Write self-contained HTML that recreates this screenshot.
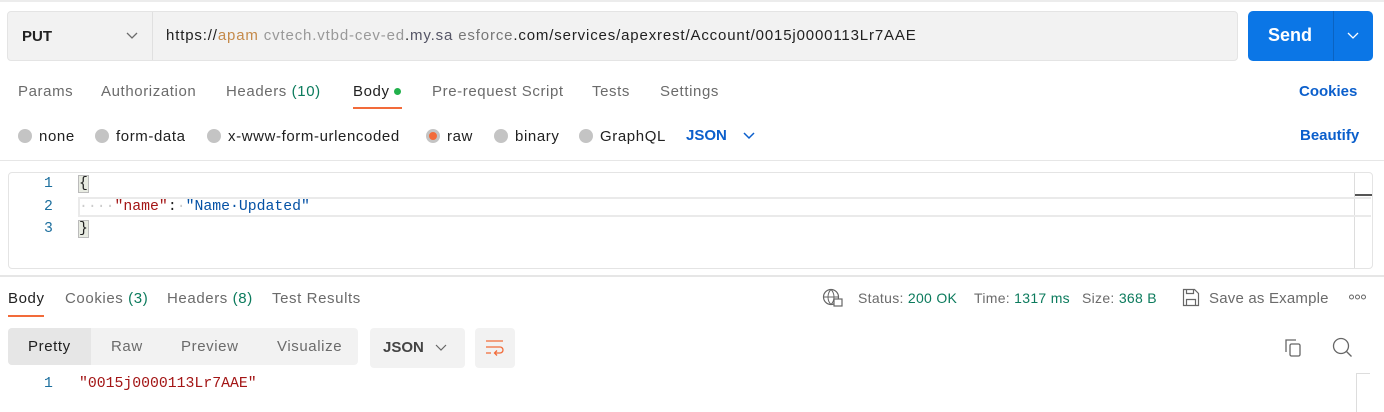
<!DOCTYPE html>
<html><head><style>
*{box-sizing:border-box;margin:0;padding:0}
body{width:1384px;height:412px;background:#fff;font-family:"Liberation Sans",sans-serif;font-size:14px;color:#212121;position:relative;overflow:hidden}
.a{position:absolute;white-space:nowrap}
.t{font-size:15px;letter-spacing:0.6px}
.g{color:#6b6b6b}
.gr{color:#0c7b5d}
.mono{font-family:"Liberation Mono",monospace;font-size:14.8px}
.rad{position:absolute;width:14px;height:14px;border-radius:50%;background:#c4c4c4;top:129px}
</style></head><body>
<div class="a" style="left:0;top:0;width:1384px;height:2px;background:#ececec"></div>
<div class="a" style="left:7px;top:11px;width:1231px;height:50px;background:#f2f2f2;border:1px solid #e4e4e4;border-radius:4px"></div>
<div class="a" style="left:152px;top:12px;width:1px;height:48px;background:#e0e0e0"></div>
<div class="a" style="left:22px;top:28px;font-weight:bold;font-size:15px;color:#212121">PUT</div>
<svg class="a" style="left:126px;top:32px" width="12" height="8"><path d="M1 1l5 5 5-5" stroke="#6b6b6b" fill="none" stroke-width="1.3"/></svg>
<div class="a" style="left:166px;top:27px;color:#212121;font-size:15px;letter-spacing:0.85px">https://<span style="color:#c58a4a">apam</span> <span style="color:#999">cvtech.vtbd-cev-ed</span>.<span style="color:#556">my.sa</span> <span style="color:#777">esforce</span>.com/services/apexrest/Account/0015j0000113Lr7AAE</div>
<div class="a" style="left:1248px;top:11px;width:125px;height:50px;background:#0b76e6;border-radius:5px"></div>
<div class="a" style="left:1333px;top:11px;width:1px;height:50px;background:#0a63c2"></div>
<div class="a" style="left:1268px;top:25px;color:#fff;font-weight:bold;font-size:18px">Send</div>
<svg class="a" style="left:1347px;top:32px" width="12" height="8"><path d="M1 1l5 5 5-5" stroke="#fff" fill="none" stroke-width="1.3"/></svg>

<div class="a g t" style="left:18px;top:83px">Params</div>
<div class="a g t" style="left:101px;top:83px">Authorization</div>
<div class="a g t" style="left:226px;top:83px">Headers <span class="gr">(10)</span></div>
<div class="a t" style="left:353px;top:83px">Body</div>
<div class="a" style="left:394px;top:88px;width:7px;height:7px;border-radius:50%;background:#22b14c"></div>
<div class="a" style="left:353px;top:107px;width:49px;height:2px;background:#f26b3a"></div>
<div class="a g t" style="left:432px;top:83px">Pre-request Script</div>
<div class="a g t" style="left:592px;top:83px">Tests</div>
<div class="a g t" style="left:660px;top:83px">Settings</div>
<div class="a" style="left:1299px;top:83px;font-size:15px;color:#0b5fcc;font-weight:bold">Cookies</div>

<div class="rad" style="left:18px"></div><div class="a t" style="left:39px;top:128px">none</div>
<div class="rad" style="left:95px"></div><div class="a t" style="left:116px;top:128px">form-data</div>
<div class="rad" style="left:207px"></div><div class="a t" style="left:228px;top:128px">x-www-form-urlencoded</div>
<div class="rad" style="left:426px;background:#f26b3a;border:3px solid #c4c4c4"></div><div class="a t" style="left:447px;top:128px">raw</div>
<div class="rad" style="left:494px"></div><div class="a t" style="left:515px;top:128px">binary</div>
<div class="rad" style="left:579px"></div><div class="a t" style="left:600px;top:128px">GraphQL</div>
<div class="a" style="left:686px;top:127px;font-size:15px;color:#0b5fcc;font-weight:bold">JSON</div>
<svg class="a" style="left:743px;top:132px" width="12" height="8"><path d="M1 1l5 5 5-5" stroke="#0b5fcc" fill="none" stroke-width="1.5"/></svg>
<div class="a" style="left:1300px;top:127px;font-size:15px;color:#0b5fcc;font-weight:bold">Beautify</div>

<div class="a" style="left:0;top:160px;width:1384px;height:1px;background:#e6e6e6"></div>
<div class="a" style="left:8px;top:172px;width:1365px;height:97px;border:1px solid #e4e4e4;border-radius:4px"></div>
<div class="a" style="left:1354px;top:173px;width:1px;height:95px;background:#ddd"></div>
<div class="a" style="left:1355px;top:194px;width:17px;height:2px;background:#555"></div>
<div class="a" style="left:78px;top:197px;width:1293px;height:20px;border:2px solid #eaeaea;border-right:none"></div>
<div class="a mono" style="left:44px;top:176px;color:#1d6f9e">1</div>
<div class="a mono" style="left:44px;top:199px;color:#1d6f9e">2</div>
<div class="a mono" style="left:44px;top:221px;color:#1d6f9e">3</div>
<div class="a mono" style="left:79px;top:176px;background:#e8ebe2;outline:1px solid #bbb">{</div>
<div class="a mono" style="left:79px;top:199px"><span style="color:#ccc">····</span><span style="color:#a31515">"name"</span>:<span style="color:#ccc">·</span><span style="color:#0451a5">"Name·Updated"</span></div>
<div class="a mono" style="left:79px;top:221px;background:#e8ebe2;outline:1px solid #bbb">}</div>

<div class="a" style="left:0;top:275px;width:1384px;height:2px;background:#e6e6e6"></div>
<div class="a t" style="left:8px;top:290px">Body</div>
<div class="a" style="left:8px;top:315px;width:36px;height:2px;background:#f26b3a"></div>
<div class="a g t" style="left:65px;top:290px">Cookies <span class="gr">(3)</span></div>
<div class="a g t" style="left:167px;top:290px">Headers <span class="gr">(8)</span></div>
<div class="a g t" style="left:272px;top:290px">Test Results</div>
<svg class="a" style="left:822px;top:288px" width="22" height="20"><circle cx="9" cy="9" r="7.5" stroke="#666" fill="none" stroke-width="1.2"/><path d="M1.5 9h15M9 1.5c-4 4-4 11 0 15M9 1.5c4 4 4 11 0 15" stroke="#666" fill="none" stroke-width="1"/><rect x="12" y="11" width="8" height="7" fill="#fff" stroke="#666" stroke-width="1.2"/></svg>
<div class="a g" style="left:858px;top:290px;letter-spacing:0.3px">Status: <span class="gr">200 OK</span></div>
<div class="a g" style="left:974px;top:290px;letter-spacing:0.3px">Time: <span class="gr">1317 ms</span></div>
<div class="a g" style="left:1082px;top:290px;letter-spacing:0.3px">Size: <span class="gr">368 B</span></div>
<svg class="a" style="left:1182px;top:288px" width="18" height="19"><path d="M1.5 1.5h11l4 4v12h-15z" stroke="#666" fill="none" stroke-width="1.2"/><path d="M4.5 1.5v4h7v-4M4.5 17.5v-6h9v6" stroke="#666" fill="none" stroke-width="1.2"/></svg>
<div class="a g" style="left:1209px;top:290px;font-size:15px;letter-spacing:0.2px">Save as Example</div>
<svg class="a" style="left:1349px;top:294px" width="18" height="6"><circle cx="2.5" cy="3" r="2" stroke="#666" fill="none"/><circle cx="8.5" cy="3" r="2" stroke="#666" fill="none"/><circle cx="14.5" cy="3" r="2" stroke="#666" fill="none"/></svg>

<div class="a" style="left:8px;top:328px;width:350px;height:37px;background:#f2f2f2;border-radius:4px"></div>
<div class="a" style="left:8px;top:328px;width:83px;height:37px;background:#e6e6e6;border-radius:4px 0 0 4px"></div>
<div class="a t" style="left:28px;top:338px">Pretty</div>
<div class="a g t" style="left:111px;top:338px">Raw</div>
<div class="a g t" style="left:181px;top:338px">Preview</div>
<div class="a g t" style="left:277px;top:338px">Visualize</div>
<div class="a" style="left:370px;top:328px;width:95px;height:40px;background:#f2f2f2;border-radius:4px"></div>
<div class="a" style="left:383px;top:339px;font-size:15px;font-weight:bold;color:#444">JSON</div>
<svg class="a" style="left:435px;top:344px" width="12" height="8"><path d="M1 1l5 5 5-5" stroke="#666" fill="none" stroke-width="1.2"/></svg>
<div class="a" style="left:475px;top:328px;width:40px;height:40px;background:#f2f2f2;border-radius:4px"></div>
<svg class="a" style="left:485px;top:338px" width="20" height="20"><path d="M1 3h17M1 9h14a3 3 0 0 1 0 6h-5M1 15h5M12 12.5l-2.5 2.5 2.5 2.5" stroke="#f26b3a" fill="none" stroke-width="1.3"/></svg>
<svg class="a" style="left:1283px;top:337px" width="22" height="22"><path d="M3 15V3h10" stroke="#666" fill="none" stroke-width="1.3"/><rect x="7" y="7" width="10" height="12" rx="1.5" stroke="#666" fill="none" stroke-width="1.3"/></svg>
<svg class="a" style="left:1332px;top:337px" width="22" height="22"><circle cx="9" cy="9" r="7.5" stroke="#666" fill="none" stroke-width="1.3"/><path d="M14.5 14.5l5 5" stroke="#666" stroke-width="1.3"/></svg>
<div class="a mono" style="left:44px;top:376px;color:#1d6f9e">1</div>
<div class="a mono" style="left:79px;top:376px;color:#a31515">"0015j0000113Lr7AAE"</div>
<div class="a" style="left:1356px;top:373px;width:1px;height:39px;background:#ddd"></div>
<div class="a" style="left:1356px;top:373px;width:14px;height:1px;background:#ddd"></div>
</body></html>
